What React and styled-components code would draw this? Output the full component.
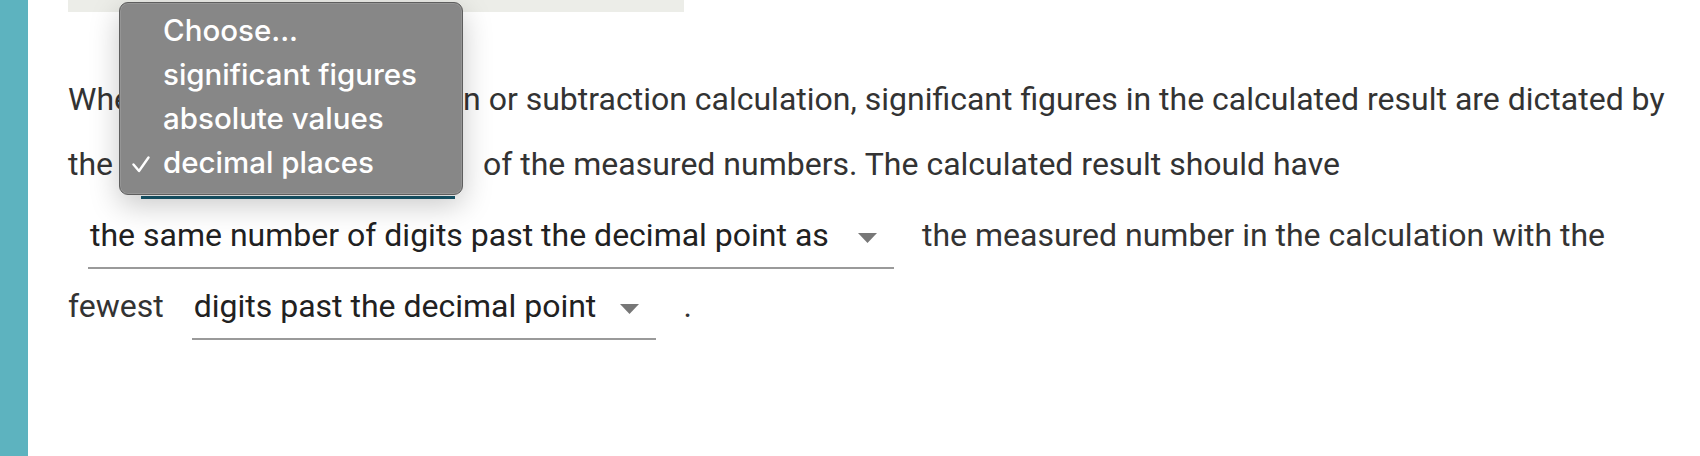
import React from "react";
import styled, { createGlobalStyle } from "styled-components";

const GlobalStyle = createGlobalStyle`
  html, body { margin: 0; padding: 0; background: #ffffff; }
  body { font-family: Roboto, "Liberation Sans", Arial, sans-serif; }
`;

const Page = styled.div`
  display: flex;
  height: 456px;
  overflow: hidden;
  background: #ffffff;
`;

const SideBar = styled.div`
  flex: none;
  width: 28px;
  background: #5db3bf;
`;

const Content = styled.main`
  position: relative;
  flex: 1;
  padding: 0 20px 0 40px;
`;

const TopStrip = styled.div`
  width: 616px;
  height: 12px;
  background: #ecede8;
`;

const Paragraph = styled.p`
  margin: 59px 0 0;
  font-size: 32px;
  line-height: 56px;
  color: #333333;
`;

const Select = styled.span`
  display: inline-flex;
  align-items: center;
  justify-content: space-between;
  gap: 18px;
  box-sizing: border-box;
  min-width: ${(p) => p.$width}px;
  margin: 9px 20px 0;
  padding: 0 17px 4px 2px;
  color: #212121;
  white-space: nowrap;
  border-bottom: 2px solid ${(p) => (p.$focused ? "#17596e" : "#9a9a9a")};
  box-shadow: ${(p) => (p.$focused ? "0 1px 0 #17596e" : "none")};
  vertical-align: baseline;
`;

const Arrow = styled.svg`
  flex: none;
  width: 19px;
  height: 10px;
  margin-top: 6px;
`;

const Menu = styled.ul`
  position: absolute;
  left: 91px;
  top: 2px;
  box-sizing: border-box;
  width: 344px;
  margin: 0;
  padding: 5px 0 10px;
  list-style: none;
  background: #878787;
  border: 1px solid #5e5e5e;
  border-radius: 9px;
  box-shadow: inset 0 0 0 1px rgba(255, 255, 255, 0.12), 0 10px 30px rgba(0, 0, 0, 0.22);
  font-family: Inter, "Noto Sans", sans-serif;
  font-weight: 500;
  font-size: 29.5px;
  line-height: 44px;
  color: #ffffff;
`;

const MenuItem = styled.li`
  display: grid;
  grid-template-columns: 31px 1fr;
  align-items: baseline;
  padding-left: 12px;
  white-space: nowrap;
`;

const Check = styled.svg`
  width: 18px;
  height: 17px;
`;

function DropArrow() {
  return (
    <Arrow viewBox="0 0 19 10">
      <polygon points="0,0 19,0 9.5,10" fill="#777777" />
    </Arrow>
  );
}

function Dropdown({ width, value, focused }) {
  return (
    <Select $width={width} $focused={focused}>
      <span>{value}</span>
      <DropArrow />
    </Select>
  );
}

const options = ["Choose...", "significant figures", "absolute values", "decimal places"];

export default function App() {
  return (
    <>
      <GlobalStyle />
      <Page>
        <SideBar />
        <Content>
          <TopStrip />
          <Paragraph>
            When performing an addition or subtraction calculation, significant figures in the calculated result are
            dictated by the <Dropdown width={314} value="decimal places" focused /> of the measured numbers. The
            calculated result should have{" "}
            <Dropdown width={806} value="the same number of digits past the decimal point as" /> the measured number in
            the calculation with the fewest <Dropdown width={464} value="digits past the decimal point" /> .
          </Paragraph>
          <Menu>
            {options.map((o, i) => (
              <MenuItem key={o}>
                <span>
                  {i === 3 && (
                    <Check viewBox="0 0 18 17">
                      <polyline points="1.5,8.5 7,15 16.5,1.5" fill="none" stroke="#ffffff" strokeWidth="2.4" strokeLinecap="round" strokeLinejoin="round" />
                    </Check>
                  )}
                </span>
                <span>{o}</span>
              </MenuItem>
            ))}
          </Menu>
        </Content>
      </Page>
    </>
  );
}
